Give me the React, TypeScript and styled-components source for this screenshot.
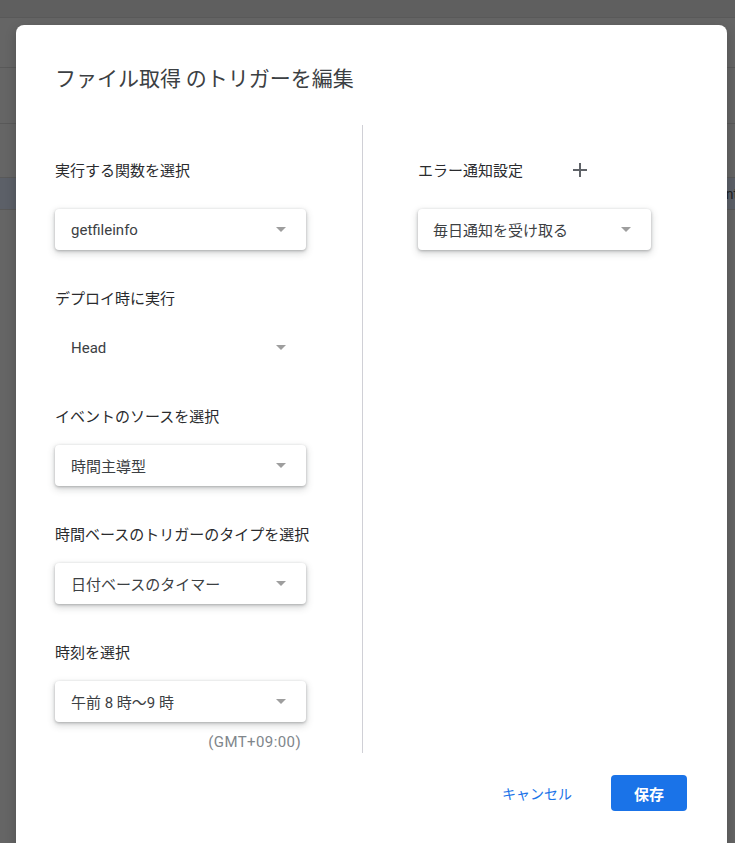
import React from "react";
import styled, { createGlobalStyle } from "styled-components";

const GlobalStyle = createGlobalStyle`
  html, body { margin: 0; padding: 0; }
  body {
    width: 735px;
    height: 843px;
    overflow: hidden;
    background: #656565;
    font-family: Roboto, "Noto Sans CJK JP", sans-serif;
  }
`;

const Page = styled.div`
  position: relative;
  width: 735px;
  height: 843px;
  overflow: hidden;
  background: #656565;
`;

const Backdrop = styled.div`
  display: flex;
  flex-direction: column;
`;

const BgRow = styled.div<{ $h: number; $bg?: string }>`
  height: ${(p) => p.$h}px;
  background: ${(p) => p.$bg || "#656565"};
  border-bottom: 1px solid #595959;
  display: flex;
  align-items: center;
  justify-content: flex-end;
  overflow: hidden;
`;

const BgText = styled.span`
  font-family: Roboto, sans-serif;
  font-size: 14px;
  color: #1e1f21;
  margin-right: -3px;
  white-space: nowrap;
`;

const Dialog = styled.div`
  position: absolute;
  left: 16px;
  top: 25px;
  width: 711px;
  height: 860px;
  box-sizing: border-box;
  background: #fff;
  border-radius: 8px;
  padding: 0 40px 0 39px;
  display: flex;
  flex-direction: column;
  box-shadow: 0 4px 12px rgba(0, 0, 0, 0.2);
`;

const Title = styled.h1`
  margin: 36px 0 32px;
  font-family: "Noto Sans CJK JP", sans-serif;
  font-size: 21px;
  font-weight: 400;
  line-height: 32px;
  color: #3c4043;
  letter-spacing: 0;
`;

const Body = styled.div`
  display: flex;
`;

const LeftColumn = styled.div`
  width: 307px;
  padding: 25px 0 1px;
  border-right: 1px solid #d0d0d6;
  display: flex;
  flex-direction: column;
`;

const RightColumn = styled.div`
  flex: 1;
  padding: 25px 0 0 55px;
  display: flex;
  flex-direction: column;
`;

const HeaderRow = styled.div`
  height: 40px;
  display: flex;
  align-items: center;
  margin-bottom: 19px;
`;

const Label = styled.div<{ $first?: boolean }>`
  font-family: "Noto Sans CJK JP", sans-serif;
  font-size: 15px;
  line-height: 20px;
  color: #2a2b2e;
  margin: ${(p) => (p.$first ? "0" : "38px 0 19px")};
`;

const IconButton = styled.button`
  width: 40px;
  height: 40px;
  margin-left: 37px;
  border: none;
  background: transparent;
  padding: 0;
  display: flex;
  align-items: center;
  justify-content: center;
  cursor: pointer;
`;

const SelectBox = styled.div<{ $width: number; $flat?: boolean; $pad?: number }>`
  width: ${(p) => p.$width}px;
  height: 41px;
  box-sizing: border-box;
  border-radius: 4px;
  background: #fff;
  box-shadow: ${(p) =>
    p.$flat
      ? "none"
      : "0 1px 3px rgba(60, 64, 67, 0.35), 0 3px 7px 1px rgba(60, 64, 67, 0.18)"};
  display: flex;
  align-items: center;
  padding-left: ${(p) => p.$pad ?? 16}px;
  padding-right: 20px;
`;

const SelectText = styled.span`
  flex: 1;
  font-family: Roboto, "Noto Sans CJK JP", sans-serif;
  font-size: 15px;
  color: #3c4043;
  white-space: nowrap;
`;

const Arrow = styled.span`
  width: 0;
  height: 0;
  border-left: 5.5px solid transparent;
  border-right: 5.5px solid transparent;
  border-top: 5px solid #9e9e9e;
`;

const Hint = styled.div`
  width: 251px;
  box-sizing: border-box;
  padding-right: 5px;
  margin-top: 10px;
  text-align: right;
  font-family: Roboto, sans-serif;
  font-size: 15px;
  letter-spacing: 0.4px;
  line-height: 20px;
  color: #80868b;
`;

const Footer = styled.div`
  margin-top: 22px;
  display: flex;
  justify-content: flex-end;
  align-items: center;
`;

const TextButton = styled.button`
  height: 36px;
  padding: 0 16px;
  margin-right: 23px;
  border: none;
  background: transparent;
  font-family: "Noto Sans CJK JP", sans-serif;
  font-size: 14px;
  color: #1a73e8;
  cursor: pointer;
`;

const PrimaryButton = styled.button`
  height: 36px;
  min-width: 76px;
  padding: 0 16px;
  border: none;
  border-radius: 4px;
  background: #1a73e8;
  font-family: "Noto Sans CJK JP", sans-serif;
  font-size: 15px;
  font-weight: 700;
  color: #fff;
  cursor: pointer;
`;

const PlusIcon = () => (
  <svg width="14" height="14" viewBox="0 0 14 14">
    <path d="M7 0v14M0 7h14" stroke="#5f6368" strokeWidth="2" fill="none" />
  </svg>
);

type SelectProps = { value: string; width: number; flat?: boolean; pad?: number };
const Select = ({ value, width, flat, pad }: SelectProps) => (
  <SelectBox $width={width} $flat={flat} $pad={pad}>
    <SelectText>{value}</SelectText>
    <Arrow />
  </SelectBox>
);

export default function App() {
  return (
    <Page>
      <GlobalStyle />
      <Backdrop>
        <BgRow $h={17} $bg="#5f5f5f" />
        <BgRow $h={49} />
        <BgRow $h={55} />
        <BgRow $h={53} />
        <BgRow $h={31} $bg="#5c6068">
          <BgText>Event</BgText>
        </BgRow>
      </Backdrop>
      <Dialog>
        <Title>ファイル取得 のトリガーを編集</Title>
        <Body>
          <LeftColumn>
            <HeaderRow>
              <Label $first>実行する関数を選択</Label>
            </HeaderRow>
            <Select value="getfileinfo" width={251} />
            <Label>デプロイ時に実行</Label>
            <Select value="Head" width={251} flat />
            <Label>イベントのソースを選択</Label>
            <Select value="時間主導型" width={251} />
            <Label>時間ベースのトリガーのタイプを選択</Label>
            <Select value="日付ベースのタイマー" width={251} />
            <Label>時刻を選択</Label>
            <Select value="午前 8 時〜9 時" width={251} />
            <Hint>(GMT+09:00)</Hint>
          </LeftColumn>
          <RightColumn>
            <HeaderRow>
              <Label $first>エラー通知設定</Label>
              <IconButton aria-label="追加">
                <PlusIcon />
              </IconButton>
            </HeaderRow>
            <Select value="毎日通知を受け取る" width={233} pad={15} />
          </RightColumn>
        </Body>
        <Footer>
          <TextButton>キャンセル</TextButton>
          <PrimaryButton>保存</PrimaryButton>
        </Footer>
      </Dialog>
    </Page>
  );
}
